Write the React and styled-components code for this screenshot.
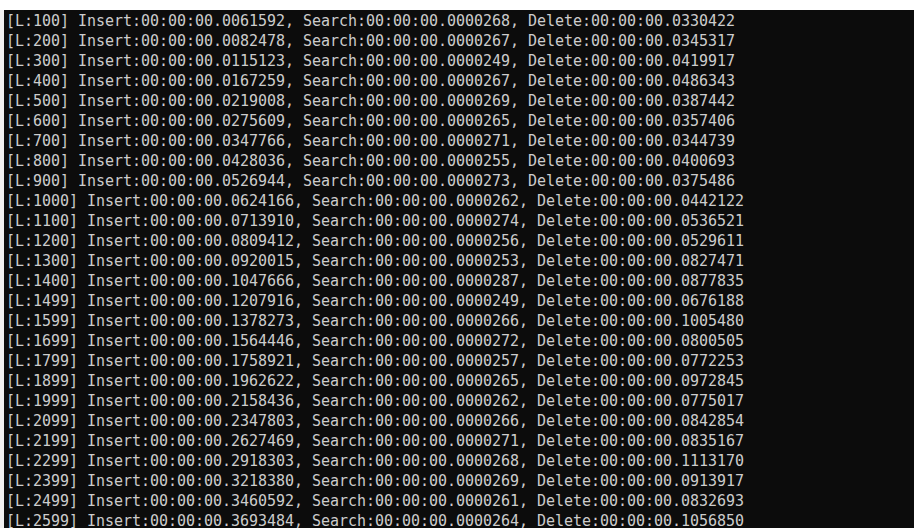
import React from 'react';
import styled, { createGlobalStyle } from 'styled-components';

const GlobalStyle = createGlobalStyle`
  html, body {
    margin: 0;
    padding: 0;
    background: #ffffff;
  }
  body {
    width: 914px;
    height: 528px;
    overflow: hidden;
  }
`;

const Screen = styled.div`
  display: flex;
  flex-direction: column;
  width: 914px;
  height: 528px;
  background: #ffffff;
`;

const TopStrip = styled.div`
  height: 10px;
  flex: none;
  background: #ffffff;
`;

const Window = styled.div`
  display: flex;
  flex: 1;
  min-height: 0;
`;

const Edge = styled.div`
  width: 4px;
  flex: none;
  background: #f0f0f0;
`;

const Console = styled.pre`
  flex: 1;
  margin: 0;
  padding: 1px 0 0 2px;
  background: #0c0c0c;
  color: #cccccc;
  font-family: "DejaVu Sans Mono", "Liberation Mono", monospace;
  font-size: 15px;
  letter-spacing: -0.03px;
  line-height: 20px;
  overflow: hidden;
`;

const Line = styled.div`
  height: 20px;
  white-space: pre;
`;

const rows = [
  ['100', '0061592', '0000268', '0330422'],
  ['200', '0082478', '0000267', '0345317'],
  ['300', '0115123', '0000249', '0419917'],
  ['400', '0167259', '0000267', '0486343'],
  ['500', '0219008', '0000269', '0387442'],
  ['600', '0275609', '0000265', '0357406'],
  ['700', '0347766', '0000271', '0344739'],
  ['800', '0428036', '0000255', '0400693'],
  ['900', '0526944', '0000273', '0375486'],
  ['1000', '0624166', '0000262', '0442122'],
  ['1100', '0713910', '0000274', '0536521'],
  ['1200', '0809412', '0000256', '0529611'],
  ['1300', '0920015', '0000253', '0827471'],
  ['1400', '1047666', '0000287', '0877835'],
  ['1499', '1207916', '0000249', '0676188'],
  ['1599', '1378273', '0000266', '1005480'],
  ['1699', '1564446', '0000272', '0800505'],
  ['1799', '1758921', '0000257', '0772253'],
  ['1899', '1962622', '0000265', '0972845'],
  ['1999', '2158436', '0000262', '0775017'],
  ['2099', '2347803', '0000266', '0842854'],
  ['2199', '2627469', '0000271', '0835167'],
  ['2299', '2918303', '0000268', '1113170'],
  ['2399', '3218380', '0000269', '0913917'],
  ['2499', '3460592', '0000261', '0832693'],
  ['2599', '3693484', '0000264', '1056850'],
];

export default function App() {
  return (
    <>
      <GlobalStyle />
      <Screen>
        <TopStrip />
        <Window>
          <Edge />
          <Console>
            {rows.map(([n, ins, srch, del]) => (
              <Line key={n}>
                {`[L:${n}] Insert:00:00:00.${ins}, Search:00:00:00.${srch}, Delete:00:00:00.${del}`}
              </Line>
            ))}
          </Console>
        </Window>
      </Screen>
    </>
  );
}
